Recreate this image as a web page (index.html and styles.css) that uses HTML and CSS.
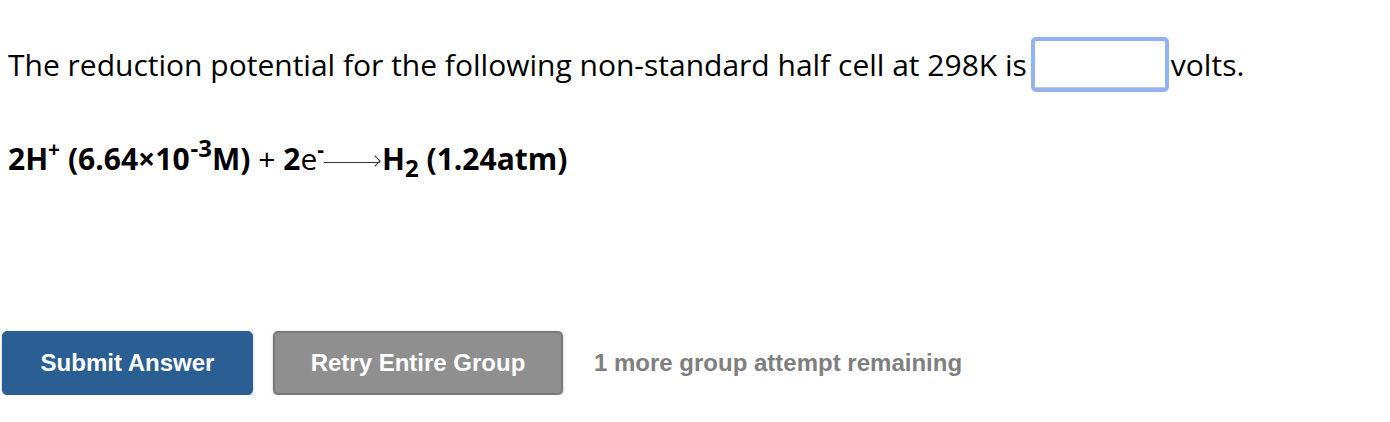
FILE: index.html
```html
<!DOCTYPE html>
<html>
<head>
<meta charset="utf-8">
<link rel="stylesheet" href="styles.css">
</head>
<body>
<div class="page">
  <p class="question">The reduction potential for the following non-standard half cell at 298K is<span class="answer"><span class="field"></span></span>volts.</p>
  <p class="equation"><b>2H</b><sup class="sp">+</sup><b> (6.64×10</b><sup class="exp">-3</sup><b>M)</b> + <b>2</b>e<sup class="sp">-</sup><span class="arrow"></span><b>H</b><sub>2</sub><b> (1.24atm)</b></p>
  <div class="actions">
    <button class="btn submit">Submit Answer</button>
    <button class="btn retry">Retry Entire Group</button>
    <span class="remaining">1 more group attempt remaining</span>
  </div>
</div>
</body>
</html>
```

FILE: styles.css
```css
html, body {
  margin: 0;
  padding: 0;
  background: #ffffff;
}
.page {
  padding: 0 0 0 8px;
  font-family: "Open Sans", sans-serif;
  color: #000;
}
.question {
  margin: 0;
  padding-top: 37px;
  font-size: 30px;
  line-height: 55px;
  height: 55px;
  display: flex;
  align-items: center;
}
.answer {
  display: inline-block;
  margin: 0 2px 0 4px;
  width: 130px;
  height: 47px;
  border: 4px solid #94b1f2;
  border-radius: 5px;
  background: #fff;
  box-sizing: content-box;
}
.field {
  display: block;
  height: 46px;
  border-bottom: 1px solid #c9c9c9;
}
.equation {
  margin: 0;
  padding-top: 47px;
  font-size: 30px;
  line-height: 40px;
  height: 40px;
  white-space: nowrap;
}
.equation b, .equation sup.exp, .equation sub {
  font-weight: 700;
}
.equation sup, .equation sub {
  line-height: 0;
  position: relative;
  vertical-align: baseline;
}
.equation sup.sp {
  top: -13px;
  font-size: 21px;
  font-weight: 700;
}
.equation sup.exp {
  top: -13px;
  font-size: 24px;
  margin-left: 1px;
}
.equation sub {
  top: 7px;
  font-size: 24px;
}
.arrow {
  display: inline-block;
  width: 56px;
  height: 10px;
  position: relative;
  vertical-align: -2px;
  border-top: 1.5px solid #333;
  box-sizing: border-box;
  margin-left: 0;
  margin-right: 2px;
}
.arrow::after {
  content: "";
  position: absolute;
  right: 1px;
  top: -6.5px;
  width: 8px;
  height: 8px;
  border-top: 1.5px solid #333;
  border-right: 1.5px solid #333;
  transform: rotate(45deg);
  transform-origin: center;
  box-sizing: border-box;
}
.actions {
  display: flex;
  align-items: center;
  margin-top: 152px;
  margin-left: -6px;
}
.btn {
  font-family: "Liberation Sans", Arial, sans-serif;
  font-weight: 700;
  font-size: 24px;
  color: #fff;
  height: 64px;
  border-radius: 5px;
  box-shadow: 0 1px 3px rgba(0,0,0,0.25);
  cursor: pointer;
  padding: 0;
}
.submit {
  width: 251px;
  background: #2b5f93;
  border: 1px solid #2b5f93;
}
.retry {
  width: 290px;
  margin-left: 20px;
  background: #8f8f8f;
  border: 2px solid #7a7a7a;
}
.remaining {
  margin-left: 31px;
  font-family: "Liberation Sans", Arial, sans-serif;
  font-weight: 700;
  font-size: 24px;
  color: #7f7f7f;
}
```
